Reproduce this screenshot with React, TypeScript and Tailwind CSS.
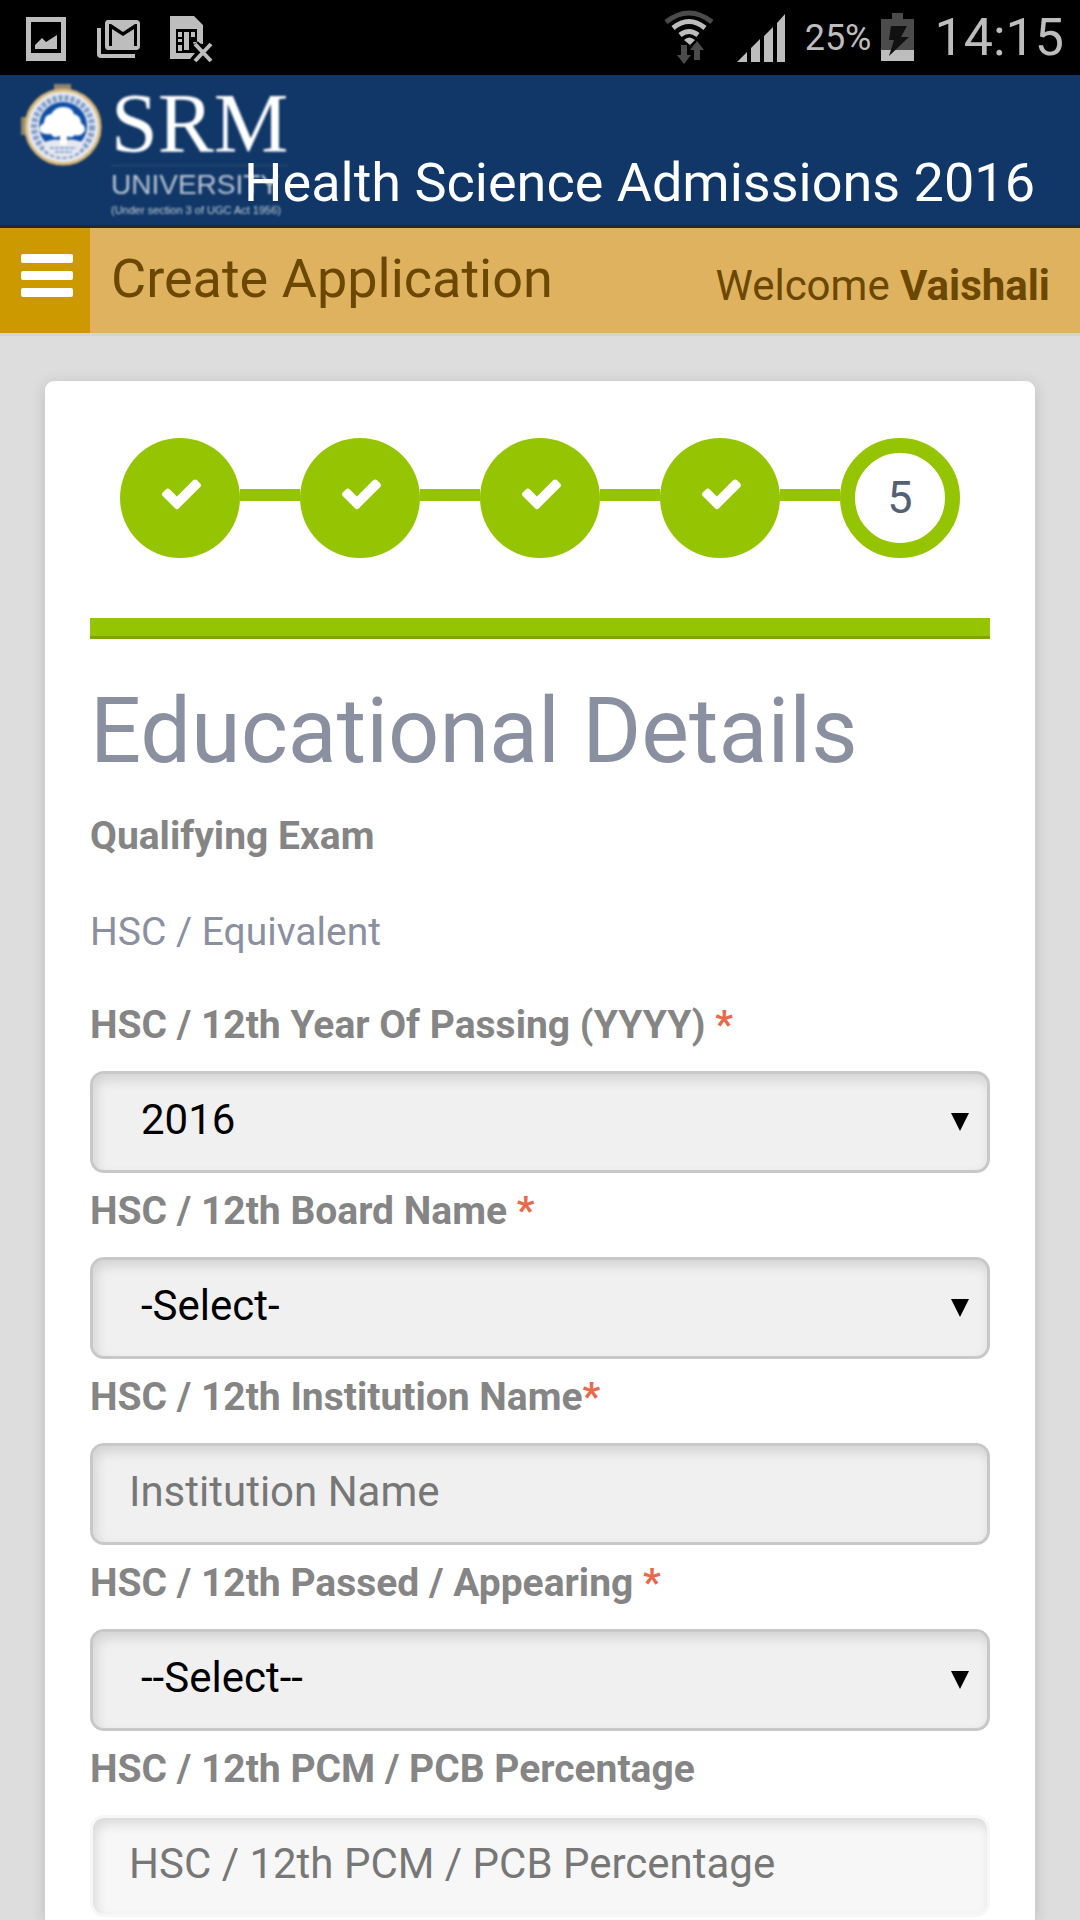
import { useId } from 'react';

const CHECK =
  'M1671 566q0 40-28 68l-724 724-136 136q-28 28-68 28t-68-28l-136-136-362-362q-28-28-28-68t28-68l136-136q28-28 68-28t68 28l294 295 656-657q28-28 68-28t68 28l136 136q28 28 28 68z';

function StatusBar() {
  return (
    <div className="flex h-[75px] items-center bg-black text-[#bdbdbd]">
      <svg className="ml-6 h-[60px] w-[200px]" viewBox="24 6 200 60" fill="#bdbdbd" aria-hidden="true">
        <path fillRule="evenodd" d="M26 15h40v44H26zM31 20v31h30V20z" />
        <path d="M35 47v-4l7-7 4 4 11-7v14z" />
        <path d="M97 26h4v26h34v4h-34q-4 0-4-4z" />
        <path
          fillRule="evenodd"
          d="M108 18h28q4 0 4 4v22q0 4-4 4h-28q-3 0-3-4V22q0-4 3-4zM109 22v22h3V27l11 7 11-7v17h3V22h-2l-12 8-12-8z"
        />
        <path d="M170 14h24l9 9v19l-8-1-3 5 3 5-5 6h-20z" />
        <path d="M176 27h21v13h-4l2 6v5h-19z" fill="#000" />
        <path d="M178 30h4v5h-4zM178 37h4v3h-4zM178 43h4v6h-4zM184 30h5v18h-5zM191 30h4v5h-4z" />
        <path d="M195 42l16 17M211 42l-16 17" stroke="#000" strokeWidth="8" />
        <path d="M195 42l16 17M211 42l-16 17" stroke="#bdbdbd" strokeWidth="4" />
      </svg>
      <div className="ml-auto flex items-center pr-4">
        <svg className="h-[60px] w-[130px]" viewBox="660 6 130 60" fill="none" aria-hidden="true">
          <path d="M667 20q23-18 46 0" stroke="#4b4b4b" strokeWidth="5" />
          <path d="M674 26q16-13 32 0M681 33q9-7 18 0" stroke="#bdbdbd" strokeWidth="5" />
          <path d="M685 38q5-5 11 0l-5 5z" fill="#bdbdbd" />
          <path d="M682 43h6v10h4l-7 9-7-9h4zM695 58h6V48h4l-7-9-7 9h4z" fill="#4b4b4b" />
          <path d="M738 60l10-10v10zM752 60V46l9-9v23zM765 60V34l9-9v35zM778 60V21l8-9v48z" fill="#bdbdbd" />
        </svg>
        <span className="ml-4 text-[36px]">25%</span>
        <svg className="ml-2 h-[60px] w-[35px]" viewBox="878 6 35 60" aria-hidden="true">
          <path d="M879 17h11v-6h11v6h11v42h-33z" fill="#4b4b4b" />
          <path d="M879 48h33v11h-33z" fill="#bdbdbd" />
          <path d="M889 24h16l-6 11h8l-20 19 5-16h-5z" fill="#111" />
        </svg>
        <span className="ml-5 text-[52px]">14:15</span>
      </div>
    </div>
  );
}

function Logo() {
  return (
    <div className="col-start-1 row-start-1 flex items-start gap-[7px] justify-self-start pl-5 pt-2 text-white blur-[1px]">
      <svg className="size-[84px]" viewBox="20 83 84 84" aria-hidden="true">
        <path d="M54 84h17v6H54zM21 117h6v18h-6z" fill="#8f866c" />
        <circle cx="63" cy="127" r="37" fill="#e8e9ee" stroke="#d9b878" strokeWidth="3" />
        <circle cx="63" cy="127" r="29" fill="none" stroke="#7f9dcd" strokeWidth="6" strokeDasharray="4 2" />
        <circle cx="63" cy="126" r="24" fill="#0f4ea5" />
        <path d="M42 143q12-5 18-3v-5h6v5q8-2 18 3-5 14-21 14t-21-14z" fill="#e8e9ee" />
        <path
          d="M60 145v-9q-7 3-9-2-8 1-11-3-2-5 4-8 0-8 7-9 5-8 13-7 8 0 10 7 7 2 7 9 6 4 3 9-4 5-9 3-4 4-8 1v9z"
          fill="#fff"
        />
        <path d="M50 148h26M55 152h17" stroke="#8ba6d2" strokeWidth="2" strokeDasharray="4 1" />
      </svg>
      <div className="flex flex-col whitespace-nowrap">
        <span className="font-['Liberation_Serif',serif] text-[84px] leading-[82px]">SRM</span>
        <span className="border-t border-[#355079] font-['Liberation_Sans',sans-serif] text-[28px] leading-[38px] text-[#bac5d6]">
          UNIVERSITY
        </span>
        <span className="font-['Liberation_Sans',sans-serif] text-[11px] leading-[12px] text-[#c5cedb]">
          (Under section 3 of UGC Act 1956)
        </span>
      </div>
    </div>
  );
}

function Header() {
  return (
    <header>
      <div className="grid h-[153px] border-b-[3px] border-[#25272c] bg-[#103767]">
        <Logo />
        <h1 className="z-10 col-start-1 row-start-1 self-end justify-self-end pb-3 pr-[45px] text-[54px] leading-[60px] text-white">
          Health Science Admissions 2016
        </h1>
      </div>
      <div className="flex h-[108px] items-stretch border-b-[3px] border-[#d3d3d3] bg-[#deb25e] text-[#6b4700]">
        <button type="button" aria-label="Menu" className="flex w-[90px] flex-col gap-2 bg-[#cc9900] pl-[21px] pt-[26px]">
          <span className="h-[9px] w-[52px] rounded-xs bg-white" />
          <span className="h-[9px] w-[52px] rounded-xs bg-white" />
          <span className="h-[9px] w-[52px] rounded-xs bg-white" />
        </button>
        <h2 className="pl-[21px] pt-[21px] text-[54px] leading-[60px]">Create Application</h2>
        <p className="ml-auto pr-[30px] pt-[31px] text-[42px] leading-[54px]">
          Welcome <strong>Vaishali</strong>
        </p>
      </div>
    </header>
  );
}

function Steps() {
  return (
    <ol className="flex items-center px-[30px]">
      {[1, 2, 3, 4].map((step) => (
        <li key={step} className="flex flex-1 items-center">
          <span className="flex size-[120px] items-center justify-center rounded-full bg-[#95c402] pb-[9px] pl-[2px]">
            <svg className="size-[45px]" viewBox="0 0 1792 1792" fill="#fff" role="img" aria-label={`Step ${step} done`}>
              <path d={CHECK} />
            </svg>
          </span>
          <span className="mb-[6px] h-3 flex-1 bg-[#95c402]" />
        </li>
      ))}
      <li className="flex size-[120px] items-center justify-center rounded-full border-[15px] border-[#95c402] bg-white text-[45px] text-[#546073]">
        5
      </li>
    </ol>
  );
}

const fieldClass =
  'block h-[102px] w-full appearance-none rounded-[14px] border-[3px] pb-[6px] text-[42px] outline-none shadow-[inset_3px_6px_12px_rgba(0,0,0,0.12)]';

type FieldProps = {
  label: string;
  star?: string;
  option?: string;
  placeholder?: string;
  muted?: boolean;
};

function Field({ label, star, option, placeholder, muted }: FieldProps) {
  const id = useId();

  return (
    <div>
      <label htmlFor={id} className="block whitespace-pre-wrap pb-5 pt-3 text-[39px] font-bold leading-[52px] text-[#858585]">
        {label}
        {star && <span className="text-[#e9694b]">{star}</span>}
      </label>
      {option ? (
        <div className="relative">
          <select id={id} className={`${fieldClass} border-[#c8c8c8] bg-[#f0f0f0] pl-12 text-black`}>
            <option>{option}</option>
          </select>
          <svg
            className="pointer-events-none absolute right-[21px] top-[42px] size-[18px]"
            viewBox="0 0 18 18"
            aria-hidden="true"
          >
            <path d="M0 0h18L9 18z" />
          </svg>
        </div>
      ) : (
        <input
          id={id}
          type="text"
          placeholder={placeholder}
          className={`${fieldClass} px-9 placeholder:text-[#777] ${
            muted ? 'border-[#f7f7f7] bg-[#f7f7f7]' : 'border-[#c8c8c8] bg-[#f0f0f0]'
          }`}
        />
      )}
    </div>
  );
}

export default function App() {
  return (
    <div className="flex min-h-screen flex-col bg-[#dddddd] font-[Roboto,sans-serif]">
      <StatusBar />
      <Header />
      <main className="mx-[45px] mt-[45px] flex-1 rounded-t-[9px] bg-white px-[45px] pb-[3px] pt-[57px] shadow-[0_3px_15px_rgba(0,0,0,0.15)]">
        <Steps />
        <div className="mt-[60px] h-[21px] border-b-[3px] border-[#7ea502] bg-[#95c402]" />
        <h3 className="mt-[41px] text-[90px] leading-[104px] text-[#8b90a0]">Educational Details</h3>
        <p className="mt-[26px] text-[39px] font-bold leading-[52px] text-[#858585]">Qualifying Exam</p>
        <p className="mb-[29px] mt-11 text-[39px] leading-[52px] text-[#8b90a0]">HSC / Equivalent</p>
        <form>
          <Field label="HSC / 12th Year Of Passing (YYYY)" star=" *" option="2016" />
          <Field label="HSC / 12th Board Name" star=" *" option="-Select-" />
          <Field label="HSC / 12th Institution Name" star="*" placeholder="Institution Name" />
          <Field label="HSC / 12th Passed / Appearing" star=" *" option="--Select--" />
          <Field label="HSC / 12th PCM / PCB Percentage" placeholder="HSC / 12th PCM / PCB Percentage" muted />
        </form>
      </main>
    </div>
  );
}
